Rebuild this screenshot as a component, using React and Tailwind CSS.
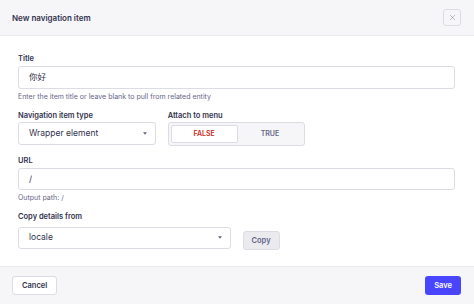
import { X } from "lucide-react"

function Label({ children }) {
  return <div className="text-[7.5px] leading-[10px] font-semibold text-[#32324d]">{children}</div>
}

function Caret() {
  return (
    <svg width="4" height="3" viewBox="0 0 10 6" className="fill-[#666687]">
      <path d="M0 0h10L5 6z" />
    </svg>
  )
}

export default function App() {
  return (
    <div className="w-[474px] h-[304px] bg-white flex flex-col font-['Inter',sans-serif] overflow-hidden">
      {/* Header */}
      <div className="h-[36px] shrink-0 bg-[#f6f6f9] border-b border-[#eaeaef] flex items-center justify-between pl-[12px] pr-[13px]">
        <h1 className="text-[8px] font-semibold text-[#32324d]">New navigation item</h1>
        <button className="w-[18px] h-[17px] rounded-[3px] border border-[#dcdce4] flex items-center justify-center">
          <X className="w-[9px] h-[9px] text-[#8e8ea9]" strokeWidth={1.5} />
        </button>
      </div>

      {/* Body */}
      <div className="flex-1 px-[18px] pt-[18px] pr-[19px]">
        <Label>Title</Label>
        <div className="mt-[2px] h-[23px] rounded-[3px] border border-[#dcdce4] flex items-center px-[10px] text-[8.5px] text-[#32324d] font-['Inter','Noto_Sans_CJK_SC',sans-serif]">
          你好
        </div>
        <div className="mt-[3px] text-[7px] leading-[10px] text-[#666687]">
          Enter the item title or leave blank to pull from related entity
        </div>

        <div className="mt-[9px] grid grid-cols-3 gap-x-[12px]">
          <div>
            <Label>Navigation item type</Label>
            <div className="mt-[1px] h-[23px] rounded-[3px] border border-[#dcdce4] flex items-center justify-between pl-[10px] pr-[8px] text-[8.5px] text-[#32324d]">
              <span>Wrapper element</span>
              <Caret />
            </div>
          </div>
          <div>
            <Label>Attach to menu</Label>
            <div className="mt-[1px] h-[24px] rounded-[3px] border border-[#dcdce4] bg-[#f6f6f9] p-[2px] flex text-[7px] font-semibold">
              <div className="flex-1 rounded-[2px] border border-[#dcdce4] bg-white flex items-center justify-center text-[#d02b20]">
                FALSE
              </div>
              <div className="flex-1 flex items-center justify-center text-[#666687]">TRUE</div>
            </div>
          </div>
        </div>

        <div className="mt-[10px]">
          <Label>URL</Label>
          <div className="mt-[2px] h-[22px] rounded-[3px] border border-[#dcdce4] flex items-center px-[10px] text-[8.5px] text-[#32324d]">
            /
          </div>
          <div className="mt-[3px] text-[7px] leading-[10px] text-[#666687]">Output path: /</div>
        </div>

        <div className="mt-[9px]">
          <Label>Copy details from</Label>
          <div className="mt-[3px] grid grid-cols-2 gap-x-[12px] items-center">
            <div className="h-[22px] rounded-[3px] border border-[#dcdce4] flex items-center justify-between pl-[10px] pr-[8px] text-[8.5px] text-[#32324d]">
              <span>locale</span>
              <Caret />
            </div>
            <div>
              <button className="h-[19px] px-[8px] rounded-[3px] border border-[#dcdce4] bg-[#eaeaef] text-[7.5px] font-semibold text-[#666687]">
                Copy
              </button>
            </div>
          </div>
        </div>
      </div>

      {/* Footer */}
      <div className="h-[38px] shrink-0 bg-[#f6f6f9] border-t border-[#eaeaef] flex items-center justify-between px-[12px] pr-[13px]">
        <button className="h-[19px] px-[9px] rounded-[3px] border border-[#dcdce4] bg-white text-[7.5px] font-semibold text-[#32324d]">
          Cancel
        </button>
        <button className="h-[19px] px-[9px] rounded-[3px] bg-[#4945ff] text-[7.5px] font-semibold text-white">
          Save
        </button>
      </div>
    </div>
  )
}
